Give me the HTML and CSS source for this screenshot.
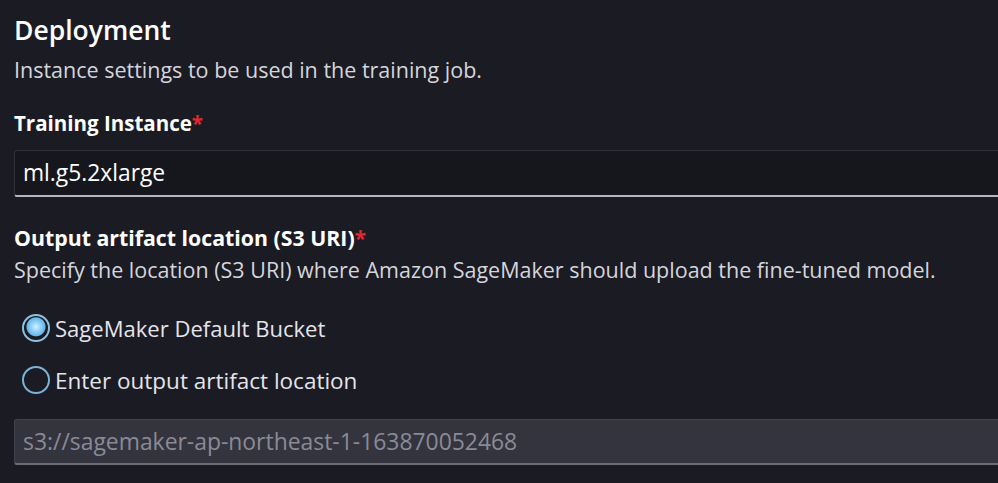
FILE: index.html
```html
<!DOCTYPE html>
<html>
<head>
<meta charset="UTF-8">
<title>Deployment</title>
<link rel="stylesheet" href="styles.css">
</head>
<body>
<div class="panel">
<h2 class="title">Deployment</h2>
<div class="desc">Instance settings to be used in the training job.</div>

<div class="field">
<label class="label">Training Instance<span class="req">*</span></label>
<div class="input">ml.g5.2xlarge</div>
</div>

<div class="field field2">
<label class="label label2">Output artifact location (S3 URI)<span class="req">*</span></label>
<div class="desc hint">Specify the location (S3 URI) where Amazon SageMaker should upload the fine-tuned model.</div>
<div class="radios">
<div class="radio"><span class="dot checked"></span>SageMaker Default Bucket</div>
<div class="radio radio2"><span class="dot"></span>Enter output artifact location</div>
</div>
<div class="input disabled">s3://sagemaker-ap-northeast-1-163870052468</div>
</div>
</div>
</body>
</html>
```

FILE: styles.css
```css
body{margin:0;background-color:#1b1b23;font-family:"Open Sans",Arial,sans-serif;font-size:21.5px;color:#dcdce2;overflow:hidden;}
.panel{padding:12px 0 0 14px;width:984px;}
.title{margin:0 0 7px 0;font-size:26.5px;font-weight:600;color:#ffffff;line-height:36px;}
.desc{line-height:30px;color:#d5d5dc;white-space:nowrap;}
.hint{margin-top:2px;}
.field{margin-top:23px;}
.field2{margin-top:26px;}
.label{display:block;font-size:20.5px;font-weight:700;color:#ffffff;line-height:30px;}
.label2{font-size:21.3px;}
.req{color:#e0282e;}
.input{margin-top:12px;height:44px;line-height:44px;padding-left:8px;font-size:22.8px;background-color:#16171c;border:1px solid #2f3038;border-right:none;border-bottom:2px solid #b6b5c0;border-radius:3px 0 0 3px;color:#ffffff;white-space:nowrap;}
.radios{margin-top:17px;}
.radio{display:flex;align-items:center;height:52px;padding-left:8px;font-size:22.05px;color:#e4e4ea;}
.radio2{font-size:22.5px;}
.dot{box-sizing:border-box;width:28px;height:28px;border-radius:50%;border:2px solid #7ab3d8;margin-right:5px;flex:none;}
.dot.checked{background:radial-gradient(circle at 50% 45%,#d2f1ff 0,#8fd0f6 5px,#68b6e8 9px,#1b1b23 10px);border-color:#8cc1e3;}
.disabled{margin-top:13px;height:43px;line-height:43px;font-size:22.9px;background-color:#34343e;border-color:#414150;border-bottom-color:#6d6d7a;color:#8a8a96;}
```
